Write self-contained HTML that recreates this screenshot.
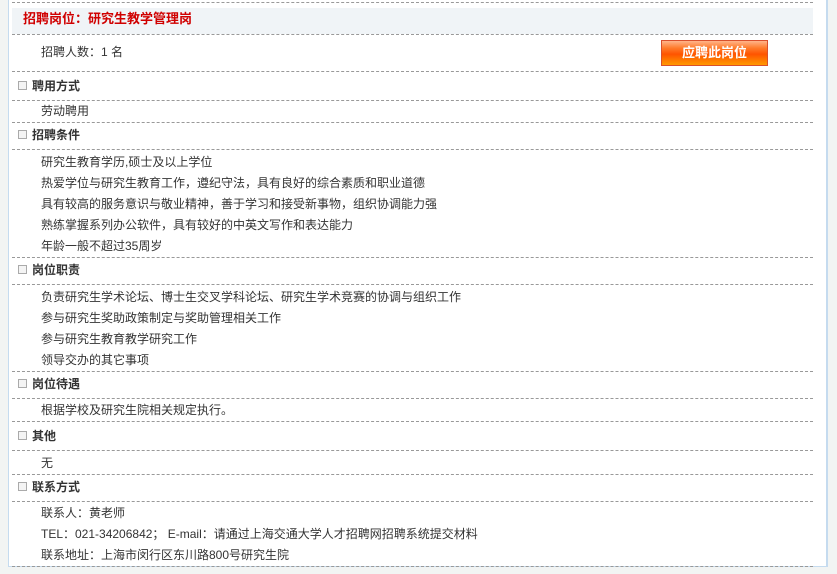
<!DOCTYPE html>
<html><head><meta charset="utf-8"><style>
body{margin:0;width:837px;height:574px;background:#f2f4f3;position:relative;overflow:hidden;font-family:"Liberation Sans","Noto Sans CJK SC",sans-serif;font-size:12px;color:#333}
.panel{position:absolute;left:8px;top:0;width:817px;height:566px;background:#fff;border-left:1px solid #c5dbef;border-right:2px solid #c5dbef;border-bottom:1px solid #c5dbef}
.d{position:absolute;left:12px;width:801px;border-top:1px dashed #999;height:0}
.t{position:absolute;white-space:nowrap;line-height:14px}
.h{left:32px;font-weight:bold;color:#333}
.c{left:41px}
.ic{position:absolute;left:18px;width:7px;height:7px;border:1px solid #aaa;background:#f4f4f4}
.band{position:absolute;left:12px;top:8px;width:801px;height:26px;background:#f0f4f7}
.btn{position:absolute;left:661px;top:40px;width:105px;height:24px;border:1px solid #d9502c;background:linear-gradient(#ffb48a 0%,#ff7a2a 30%,#ff5400 55%,#ff9a00 100%);color:#fff;font-weight:bold;font-size:13px;text-align:center;line-height:24px}
</style></head><body>
<div class="panel"></div>
<div class="d" style="top:2px"></div>
<div class="band"></div>
<div class="t" style="left:23px;top:12px;color:#d00000;font-weight:bold;font-size:13px">招聘岗位：研究生教学管理岗</div>
<div class="d" style="top:34px"></div>
<div class="t c" style="top:45px">招聘人数：1 名</div>
<div class="btn">应聘此岗位</div>
<div class="d" style="top:71px"></div>
<div class="ic" style="top:81px"></div><div class="t h" style="top:79px">聘用方式</div>
<div class="d" style="top:100px"></div>
<div class="t c" style="top:104px">劳动聘用</div>
<div class="d" style="top:122px"></div>
<div class="ic" style="top:130px"></div><div class="t h" style="top:128px">招聘条件</div>
<div class="d" style="top:149px"></div>
<div class="t c" style="top:155px">研究生教育学历,硕士及以上学位</div>
<div class="t c" style="top:176px">热爱学位与研究生教育工作，遵纪守法，具有良好的综合素质和职业道德</div>
<div class="t c" style="top:197px">具有较高的服务意识与敬业精神，善于学习和接受新事物，组织协调能力强</div>
<div class="t c" style="top:218px">熟练掌握系列办公软件，具有较好的中英文写作和表达能力</div>
<div class="t c" style="top:239px">年龄一般不超过35周岁</div>
<div class="d" style="top:257px"></div>
<div class="ic" style="top:265px"></div><div class="t h" style="top:263px">岗位职责</div>
<div class="d" style="top:284px"></div>
<div class="t c" style="top:290px">负责研究生学术论坛、博士生交叉学科论坛、研究生学术竞赛的协调与组织工作</div>
<div class="t c" style="top:311px">参与研究生奖助政策制定与奖助管理相关工作</div>
<div class="t c" style="top:332px">参与研究生教育教学研究工作</div>
<div class="t c" style="top:353px">领导交办的其它事项</div>
<div class="d" style="top:371px"></div>
<div class="ic" style="top:379px"></div><div class="t h" style="top:377px">岗位待遇</div>
<div class="d" style="top:398px"></div>
<div class="t c" style="top:403px">根据学校及研究生院相关规定执行。</div>
<div class="d" style="top:421px"></div>
<div class="ic" style="top:431px"></div><div class="t h" style="top:429px">其他</div>
<div class="d" style="top:450px"></div>
<div class="t c" style="top:456px">无</div>
<div class="d" style="top:474px"></div>
<div class="ic" style="top:482px"></div><div class="t h" style="top:480px">联系方式</div>
<div class="d" style="top:501px"></div>
<div class="t c" style="top:506px">联系人：黄老师</div>
<div class="t c" style="top:527px">TEL：021-34206842； E-mail：请通过上海交通大学人才招聘网招聘系统提交材料</div>
<div class="t c" style="top:548px">联系地址：上海市闵行区东川路800号研究生院</div>
<div class="d" style="top:566px"></div>
</body></html>
